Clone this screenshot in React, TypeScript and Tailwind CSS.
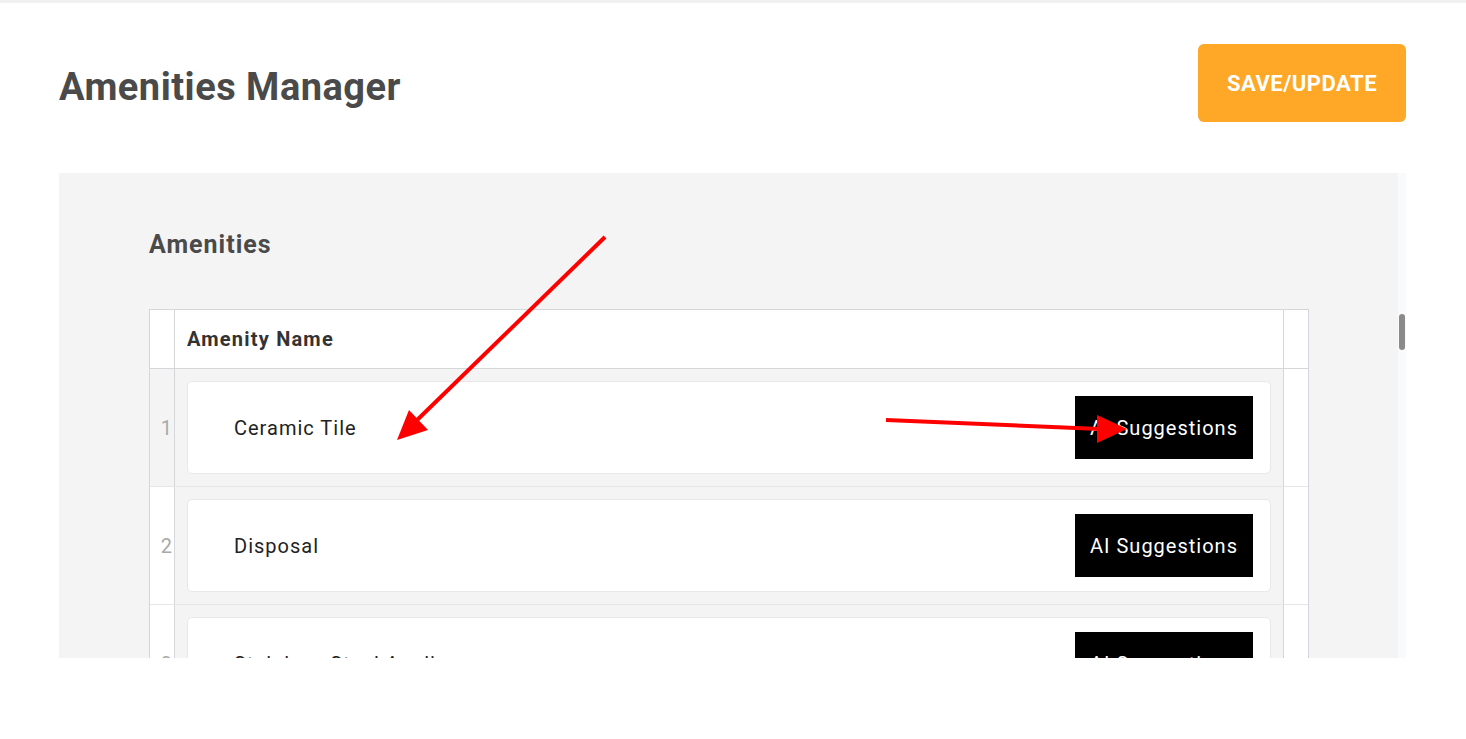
import React from 'react';

const amenities = ['Ceramic Tile', 'Disposal', 'Stainless Steel Appliances'];

const AmenityRow = ({ index, name }: { index: number; name: string }) => (
  <div className="flex h-[118px] border-b border-[#e6e6e6]">
    <div
      className={`w-[25px] shrink-0 flex items-center justify-end pr-[2px] border-r border-[#d4d6da] text-[20px] text-[#a9a9a9] ${
        index === 1 ? 'bg-[#f4f4f4]' : 'bg-white'
      }`}
    >
      {index}
    </div>
    <div className="flex-1 bg-[#f4f4f4] px-[12px] pt-[12px] pb-[12px]">
      <div className="h-[93px] bg-white border border-[#e8e8e8] rounded-[5px] flex items-center justify-between pl-[46px] pr-[17px]">
        <span className="text-[20px] tracking-[1px] text-[#222]">{name}</span>
        <button className="h-[63px] w-[178px] bg-black text-white text-[20px] tracking-[1px] flex items-center justify-center">
          AI Suggestions
        </button>
      </div>
    </div>
    <div className="w-[25px] shrink-0 bg-white border-l border-[#d4d6da]" />
  </div>
);

export default function App() {
  return (
    <div className="relative min-h-screen bg-white font-['Roboto',sans-serif] overflow-hidden">
      <div className="h-[3px] bg-[#f1f1f1]" />

      {/* Header */}
      <div className="flex items-start justify-between pl-[59px] pr-[60px] pt-[41px]">
        <h1 className="mt-[17px] text-[38px] leading-[52px] font-bold tracking-[0.5px] text-[#4a4a4a]">Amenities Manager</h1>
        <button className="h-[78px] w-[208px] rounded-[6px] bg-[#ffa726] text-white text-[22px] font-bold tracking-[0.5px]">
          SAVE/UPDATE
        </button>
      </div>

      {/* Panel */}
      <div className="mt-[51px] ml-[59px] mr-[60px] h-[485px] flex overflow-hidden">
        <div className="flex-1 bg-[#f4f4f4] pl-[90px] pr-[89px] pt-[58px]">
          <h2 className="text-[25px] leading-[28px] font-bold tracking-[1px] text-[#4a4a4a]">Amenities</h2>

          <div className="mt-[50px] border border-[#d4d6da] border-b-0">
            {/* header row */}
            <div className="flex h-[59px] bg-white border-b border-[#d4d6da]">
              <div className="w-[25px] shrink-0 border-r border-[#d4d6da]" />
              <div className="flex-1 flex items-center pl-[12px] text-[20px] font-bold tracking-[1.2px] text-[#333]">
                Amenity Name
              </div>
              <div className="w-[25px] shrink-0 border-l border-[#d4d6da]" />
            </div>
            {amenities.map((a, i) => (
              <AmenityRow key={a} index={i + 1} name={a} />
            ))}
          </div>
        </div>
        <div className="w-[8px] shrink-0 bg-[#f9fafb] pt-[141px] pl-[1px]">
          <div className="w-[6px] h-[36px] rounded-full bg-[#8a8a8a]" />
        </div>
      </div>

      {/* annotation arrows */}
      <svg className="absolute inset-0 pointer-events-none" width="1466" height="739">
        <line x1="605" y1="237" x2="412" y2="425" stroke="#ff0000" strokeWidth="4" />
        <polygon points="397,440 409,410 428,430" fill="#ff0000" />
        <line x1="886" y1="420" x2="1100" y2="429" stroke="#ff0000" strokeWidth="4" />
        <polygon points="1127,429 1097,415 1097,443" fill="#ff0000" />
      </svg>
    </div>
  );
}
